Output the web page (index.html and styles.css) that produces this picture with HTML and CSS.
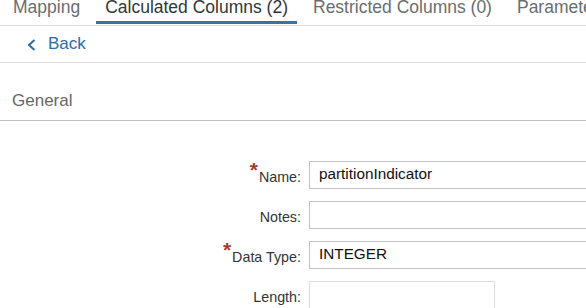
FILE: index.html
```html
<!DOCTYPE html>
<html>
<head>
<meta charset="utf-8">
<link rel="stylesheet" href="styles.css">
</head>
<body>
<div class="tabs">
  <div class="tab">Mapping</div>
  <div class="tab active">Calculated Columns (2)</div>
  <div class="tab">Restricted Columns (0)</div>
  <div class="tab">Parameters</div>
</div>
<div class="backbar">
  <svg class="chev" width="9" height="12" viewBox="0 0 9 12"><polyline points="7.5,1 2,6 7.5,11" fill="none" stroke="#2d6ca5" stroke-width="2"/></svg>
  <span class="back">Back</span>
</div>
<div class="section">General</div>
<div class="form">
  <label class="lbl"><span class="req">*</span>Name:</label>
  <input class="inp" type="text" value="partitionIndicator">
  <label class="lbl">Notes:</label>
  <input class="inp" type="text" value="">
  <label class="lbl"><span class="req">*</span>Data Type:</label>
  <input class="inp" type="text" value="INTEGER">
  <label class="lbl">Length:</label>
  <input class="inp short" type="text" value="">
</div>
</body>
</html>
```

FILE: styles.css
```css
html, body {
  margin: 0;
  padding: 0;
  background: #fff;
  overflow: hidden;
  font-family: "Liberation Sans", Arial, sans-serif;
}
body {
  width: 586px;
  height: 308px;
}
.tabs {
  display: flex;
  gap: 7px;
  height: 25px;
  padding-left: 4px;
  border-bottom: 1px solid #d9d9d9;
  white-space: nowrap;
  overflow: hidden;
}
.tab {
  box-sizing: border-box;
  margin-top: -3px;
  height: 27px;
  padding: 0 9px;
  font-size: 17.5px;
  line-height: 20px;
  color: #6a6d70;
  border-bottom: 3px solid transparent;
  flex-shrink: 0;
}
.tab.active {
  color: #32363a;
  border-bottom-color: #3a72a6;
}
.backbar {
  display: flex;
  align-items: center;
  height: 36px;
  padding-left: 27px;
  border-bottom: 1px solid #e0e0e0;
}
.chev {
  display: block;
  margin-right: 12px;
  margin-top: 1px;
}
.back {
  font-size: 17px;
  line-height: 36px;
  color: #2d6ca5;
}
.section {
  padding: 28px 0 9px 12px;
  font-size: 17px;
  line-height: 20px;
  color: #666;
  border-bottom: 1px solid #bfbfbf;
}
.form {
  display: grid;
  grid-template-columns: 301px 300px;
  grid-auto-rows: 28px;
  column-gap: 8px;
  row-gap: 12px;
  padding-top: 40px;
}
.lbl {
  text-align: right;
  font-size: 14.3px;
  line-height: 32px;
  height: 28px;
  color: #333;
  white-space: nowrap;
}
.req {
  color: #a83a30;
  font-size: 21px;
  font-weight: bold;
  line-height: 0;
  vertical-align: 5px;
  margin-right: 1px;
}
.inp {
  box-sizing: border-box;
  height: 28px;
  width: 300px;
  margin: 0;
  border: 1px solid #c2c2c2;
  border-radius: 0;
  padding: 0 0 2px 9px;
  font-family: "Liberation Sans", Arial, sans-serif;
  font-size: 15.3px;
  color: #111;
  background: #fff;
  outline: none;
}
.inp.short {
  width: 186px;
  border-color: #dcdcdc;
}
```
